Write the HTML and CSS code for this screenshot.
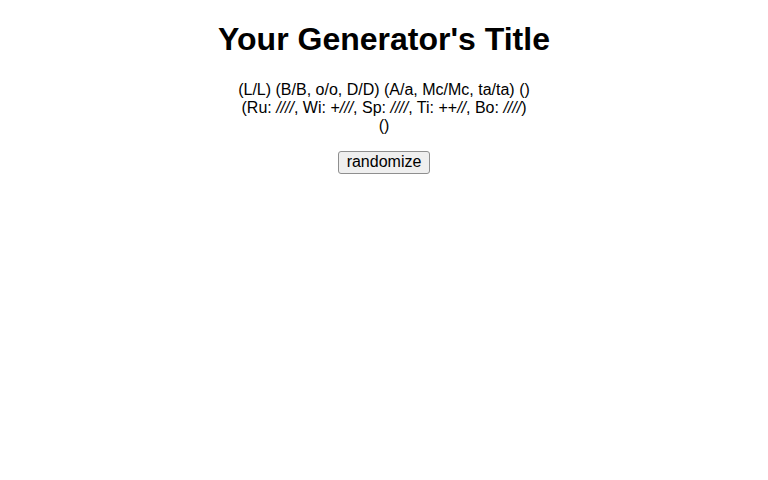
FILE: index.html
```html
<!DOCTYPE html>
<html lang="en">
<head>
  <meta charset="UTF-8">
  <title>Your Generator's Title</title>
  <link rel="stylesheet" href="styles.css">
</head>
<body>
  <h1>Your Generator's Title</h1>

  <p class="output" id="output">
    (L/L) (B/B, o/o, D/D) (A/a, Mc/Mc, ta/ta) ()<br>
    (Ru: <i>////</i>, Wi: +<i>///</i>, Sp: <i>////</i>, Ti: ++<i>//</i>, Bo: <i>////</i>)<br>
    ()
  </p>

  <div class="controls">
    <button class="randomize" onclick="randomize()">randomize</button>
  </div>

  <script>
    function randomize() {
      // placeholder until the generator tables are filled in
    }
  </script>
</body>
</html>
```

FILE: styles.css
```css
body {
  font-family: "Liberation Sans", Arial, sans-serif;
  margin: 0 8px;
  color: #000;
  background: #fff;
  text-align: center;
}
h1 {
  font-size: 32px;
  margin: 21px 0 22.5px;
}
.output {
  font-size: 16px;
  line-height: 18px;
  margin: 16px 0;
}
.output i {
  font-style: italic;
}
.controls {
  margin-top: 15px;
}
.randomize {
  font-family: "Liberation Sans", Arial, sans-serif;
  font-size: 16px;
  padding: 1px 8px 2px;
  border: 1px solid #8f8f8f;
  border-radius: 3px;
  background-color: #efefef;
  color: #000;
  cursor: pointer;
}
.randomize:hover {
  background-color: #e5e5e5;
}
```
